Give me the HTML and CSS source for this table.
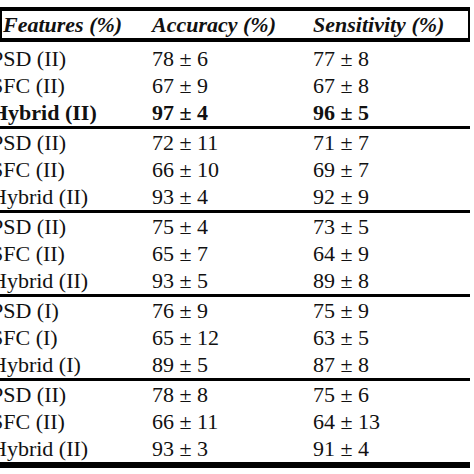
FILE: index.html
```html
<!DOCTYPE html>
<html lang="en">
  <head>
    <meta charset="utf-8">
    <title>Results table</title>
    <link rel="stylesheet" href="styles.css">
  </head>
  <body>
    <div class="table">
      <div class="row head">
        <span class="name">Features (%)</span>
        <span>Accuracy (%)</span>
        <span>Sensitivity (%)</span>
      </div>
      <div class="group first">
        <div class="row"><span class="name">PSD (II)</span><span>78 ± 6</span><span>77 ± 8</span></div>
        <div class="row"><span class="name">SFC (II)</span><span>67 ± 9</span><span>67 ± 8</span></div>
        <div class="row best"><span class="name">Hybrid (II)</span><span>97 ± 4</span><span>96 ± 5</span></div>
      </div>
      <div class="group">
        <div class="row"><span class="name">PSD (II)</span><span>72 ± 11</span><span>71 ± 7</span></div>
        <div class="row"><span class="name">SFC (II)</span><span>66 ± 10</span><span>69 ± 7</span></div>
        <div class="row"><span class="name">Hybrid (II)</span><span>93 ± 4</span><span>92 ± 9</span></div>
      </div>
      <div class="group">
        <div class="row"><span class="name">PSD (II)</span><span>75 ± 4</span><span>73 ± 5</span></div>
        <div class="row"><span class="name">SFC (II)</span><span>65 ± 7</span><span>64 ± 9</span></div>
        <div class="row"><span class="name">Hybrid (II)</span><span>93 ± 5</span><span>89 ± 8</span></div>
      </div>
      <div class="group">
        <div class="row"><span class="name">PSD (I)</span><span>76 ± 9</span><span>75 ± 9</span></div>
        <div class="row"><span class="name">SFC (I)</span><span>65 ± 12</span><span>63 ± 5</span></div>
        <div class="row"><span class="name">Hybrid (I)</span><span>89 ± 5</span><span>87 ± 8</span></div>
      </div>
      <div class="group last">
        <div class="row"><span class="name">PSD (II)</span><span>78 ± 8</span><span>75 ± 6</span></div>
        <div class="row"><span class="name">SFC (II)</span><span>66 ± 11</span><span>64 ± 13</span></div>
        <div class="row"><span class="name">Hybrid (II)</span><span>93 ± 3</span><span>91 ± 4</span></div>
      </div>
    </div>
  </body>
</html>
```

FILE: styles.css
```css
* {
  box-sizing: border-box;
}

html, body {
  background: #fff;
}

body {
  margin: 7px 0 0 0;
  overflow: hidden;

  font-family: "Liberation Serif", "Times New Roman", serif;
  font-size: 22px;
  color: #111;
}

.table {
  width: 470px;
}

.row {
  display: grid;
  grid-template-columns: 152px 161px 157px;

  height: 27px;
  line-height: 27px;
  white-space: nowrap;
}

.row .name {
  margin-left: -9px;
}

.head {
  box-sizing: content-box;
  grid-template-columns: 150px 161px 155px;

  border: 4px solid #000;
  border-left-width: 2px;
  border-right-width: 2px;

  font-weight: bold;
  font-style: italic;
}

.head .name {
  margin-left: 1px;
}

.group {
  border-bottom: 3px solid #000;
}

.group.first {
  padding-top: 3px;
}

.group.last {
  border-bottom-width: 6px;
}

.best {
  font-weight: bold;
}
```
